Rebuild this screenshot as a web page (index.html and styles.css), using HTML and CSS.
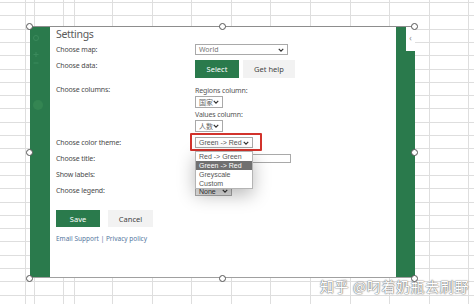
FILE: index.html
```html
<!DOCTYPE html>
<html lang="zh-CN">
<head>
    <meta charset="UTF-8">
    <title>Settings</title>
    <link rel="stylesheet" href="styles.css">
</head>
<body>
<div class="pane">
    <div class="rail rail-left">
        <svg width="20" height="110" viewBox="0 0 20 110">
            <circle cx="6" cy="9" r="2.5" fill="none" stroke="#3b8a5c" stroke-width="1"></circle>
            <path d="M6 23v5M3.5 25.5h5" stroke="#3b8a5c" stroke-width="1"></path>
            <path d="M3.5 34h5" stroke="#3b8a5c" stroke-width="1"></path>
            <circle cx="8" cy="76" r="5" fill="#348552"></circle>
        </svg>
    </div>
    <div class="content">
        <div class="title">Settings</div>

        <div class="row row-map">
            <div class="label">Choose map:</div>
            <div class="select w-world">World<svg class="chev" viewBox="0 0 8 5"><path d="M1 1l3 3 3-3"></path></svg></div>
        </div>

        <div class="row row-data">
            <div class="label">Choose data:</div>
            <div class="btns">
                <span class="btn btn-primary w-select">Select</span>
                <span class="btn btn-light w-help">Get help</span>
            </div>
        </div>

        <div class="row row-columns">
            <div class="label">Choose columns:</div>
            <div class="ctl">
                <div class="sub">Regions column:</div>
                <div class="select w-small cjk">国家<svg class="chev" viewBox="0 0 8 5"><path d="M1 1l3 3 3-3"></path></svg></div>
                <div class="sub">Values column:</div>
                <div class="select w-small cjk">人数<svg class="chev" viewBox="0 0 8 5"><path d="M1 1l3 3 3-3"></path></svg></div>
            </div>
        </div>

        <div class="row row-theme">
            <div class="label">Choose color theme:</div>
            <div class="ctl theme">
                <span class="mark">
                    <span class="select w-theme">Green -&gt; Red<svg class="chev" viewBox="0 0 8 5"><path d="M1 1l3 3 3-3"></path></svg></span>
                </span>
                <ul class="options">
                    <li>Red -&gt; Green</li>
                    <li class="active">Green -&gt; Red</li>
                    <li>Greyscale</li>
                    <li>Custom</li>
                </ul>
            </div>
        </div>

        <div class="row row-title">
            <div class="label">Choose title:</div>
            <div class="input w-input"></div>
        </div>

        <div class="row row-labels">
            <div class="label">Show labels:</div>
        </div>

        <div class="row row-legend">
            <div class="label">Choose legend:</div>
            <div class="select w-legend">None<svg class="chev" viewBox="0 0 8 5"><path d="M1 1l3 3 3-3"></path></svg></div>
        </div>

        <div class="actions">
            <span class="btn btn-primary w-save">Save</span>
            <span class="btn btn-light w-cancel">Cancel</span>
        </div>

        <div class="links">
            <a href="#">Email Support</a> | <a href="#">Privacy policy</a>
        </div>
    </div>
    <div class="rail rail-right">
        <div class="tab">&lsaquo;</div>
    </div>

    <span class="handle h-tl"></span>
    <span class="handle h-tm"></span>
    <span class="handle h-tr"></span>
    <span class="handle h-ml"></span>
    <span class="handle h-mr"></span>
    <span class="handle h-bl"></span>
    <span class="handle h-bm"></span>
    <span class="handle h-br"></span>
</div>

<div class="watermark">知乎 @叼着奶瓶去刷野</div>
</body>
</html>
```

FILE: styles.css
```css
:root {
    --green: #2a7a4c;
    --grid-line: #dedede;
    --label-color: #4a4a4a;
    --border: #a9a9a9;
}

* {
    box-sizing: border-box;
    margin: 0;
    padding: 0;
}

body {
    width: 474px;
    height: 304px;
    overflow: hidden;
    position: relative;
    font-family: 'Noto Sans', 'Noto Sans CJK SC', sans-serif;
    -webkit-font-smoothing: antialiased;
    background-color: #fff;
    background-image:
        linear-gradient(to right,
            transparent 25px, var(--grid-line) 25px, var(--grid-line) 26px,
            transparent 26px, transparent 63px, var(--grid-line) 63px, var(--grid-line) 64px,
            transparent 64px),
        repeating-linear-gradient(to right,
            var(--grid-line) 0, var(--grid-line) 1px, transparent 1px, transparent 39.6px),
        repeating-linear-gradient(to bottom,
            transparent 0, transparent 2px, var(--grid-line) 2px, var(--grid-line) 3px, transparent 3px, transparent 13.3px);
    background-position: 0 0, 112px 0, 0 0;
    background-repeat: no-repeat, repeat-x, repeat;
    background-size: 100% 100%, 100% 100%, 100% 100%;
}

/* add-in panel */
.pane {
    position: relative;
    display: flex;
    width: 385px;
    height: 252px;
    margin: 26px 0 0 30px;
    background: #fff;
    border-top: 1px solid #8d8d8d;
    border-bottom: 1px solid #a0a0a0;
}

.rail {
    flex: none;
    background: var(--green);
}

.rail-left {
    width: 20px;
    padding-top: 2px;
}

.rail-right {
    width: 19px;
    display: flex;
    justify-content: flex-end;
    align-items: flex-start;
}

.tab {
    width: 9px;
    height: 24px;
    background: #fff;
    color: #888;
    font-size: 8px;
    line-height: 22px;
    text-align: center;
}

.content {
    flex: 1;
    padding-left: 6px;
    color: var(--label-color);
    font-size: 7px;
}

.title {
    font-size: 10.5px;
    line-height: 14px;
    color: #5a5a5a;
    letter-spacing: -0.3px;
    margin-bottom: 3px;
}

.row {
    display: flex;
    align-items: flex-start;
}

.label {
    width: 139px;
    flex: none;
    line-height: 11px;
    letter-spacing: -0.15px;
}

.row-map { margin-bottom: 5px; }
.row-data { margin-bottom: 6px; }
.row-columns { margin-bottom: 5px; }
.row-theme { margin-bottom: 6px; }
.row-title { margin-bottom: 6px; }
.row-labels { margin-bottom: 6px; }
.row-legend { margin-bottom: 14px; }

.row-title .label,
.row-labels .label,
.row-legend .label {
    line-height: 10px;
}

.sub {
    line-height: 10px;
    margin-top: 2px;
    color: #555;
    letter-spacing: -0.15px;
}

/* selects */
.select {
    display: flex;
    align-items: center;
    justify-content: space-between;
    height: 11px;
    padding: 0 3px;
    border: 1px solid var(--border);
    background: #fff;
    font-family: 'Liberation Sans', Arial, sans-serif;
    font-size: 7px;
    color: #444;
}

.select .chev {
    width: 6px;
    height: 4px;
    fill: none;
    stroke: #333;
    stroke-width: 1.6;
}

.w-world {
    width: 93px;
    color: #777;
    font-family: 'Noto Sans', sans-serif;
}

.w-small {
    width: 28px;
    height: 12px;
}

.cjk {
    font-family: 'Noto Sans CJK SC', sans-serif;
    color: #666;
}

.w-theme {
    width: 58px;
    color: #555;
}

.w-legend {
    width: 37px;
    height: 10px;
    background: #e4e4e4;
    color: #333;
}

.input {
    height: 9px;
    border: 1px solid var(--border);
    background: #fff;
}

.w-input {
    width: 96px;
}

/* highlighted colour theme picker */
.theme {
    position: relative;
}

.mark {
    display: block;
    margin: -4px 0 -3px -5px;
    padding: 2px 7px 1px 3px;
    border: 2px solid #d2332c;
    border-radius: 1px;
}

.options {
    position: absolute;
    top: 14px;
    left: 0;
    width: 58px;
    list-style: none;
    background: #fff;
    border: 1px solid #b4b4b4;
    box-shadow: 0 6px 18px rgba(0, 0, 0, 0.28);
    font-family: 'Liberation Sans', Arial, sans-serif;
    font-size: 7px;
    color: #555;
    z-index: 2;
}

.options li {
    height: 9px;
    line-height: 9px;
    padding-left: 3px;
}

.options .active {
    background: #707070;
    color: #fff;
}

/* buttons */
.btns,
.actions {
    display: flex;
    gap: 4px;
}

.actions {
    gap: 8px;
    margin-bottom: 7px;
}

.btn {
    display: flex;
    align-items: center;
    justify-content: center;
    height: 18px;
    font-size: 7.5px;
}

.btn-primary {
    background: var(--green);
    color: #fff;
}

.btn-light {
    background: #f2f2f2;
    color: #444;
}

.w-select { width: 44px; }
.w-help { width: 52px; }
.w-save { width: 44px; height: 17px; }
.w-cancel { width: 45px; height: 17px; }

.links {
    line-height: 10px;
    font-size: 6.5px;
    color: #5677a0;
}

.links a {
    color: #5677a0;
    text-decoration: none;
}

/* selection handles */
.handle {
    position: absolute;
    width: 7px;
    height: 7px;
    border: 1px solid #555;
    border-radius: 50%;
    background: #fff;
    z-index: 3;
}

.h-tl { left: -4px; top: -4px; }
.h-tm { left: 189px; top: -4px; }
.h-tr { left: 381px; top: -4px; }
.h-ml { left: -4px; top: 122px; }
.h-mr { left: 381px; top: 122px; }
.h-bl { left: -4px; top: 248px; }
.h-bm { left: 189px; top: 248px; }
.h-br { left: 381px; top: 248px; }

.watermark {
    position: absolute;
    left: 320px;
    top: 276px;
    font-family: 'Noto Sans CJK SC', sans-serif;
    font-size: 14px;
    color: #fff;
    letter-spacing: 0.6px;
    text-shadow: 0 0 1px #777, 0 0 1px #777, 0 0 2px #999;
}
```
